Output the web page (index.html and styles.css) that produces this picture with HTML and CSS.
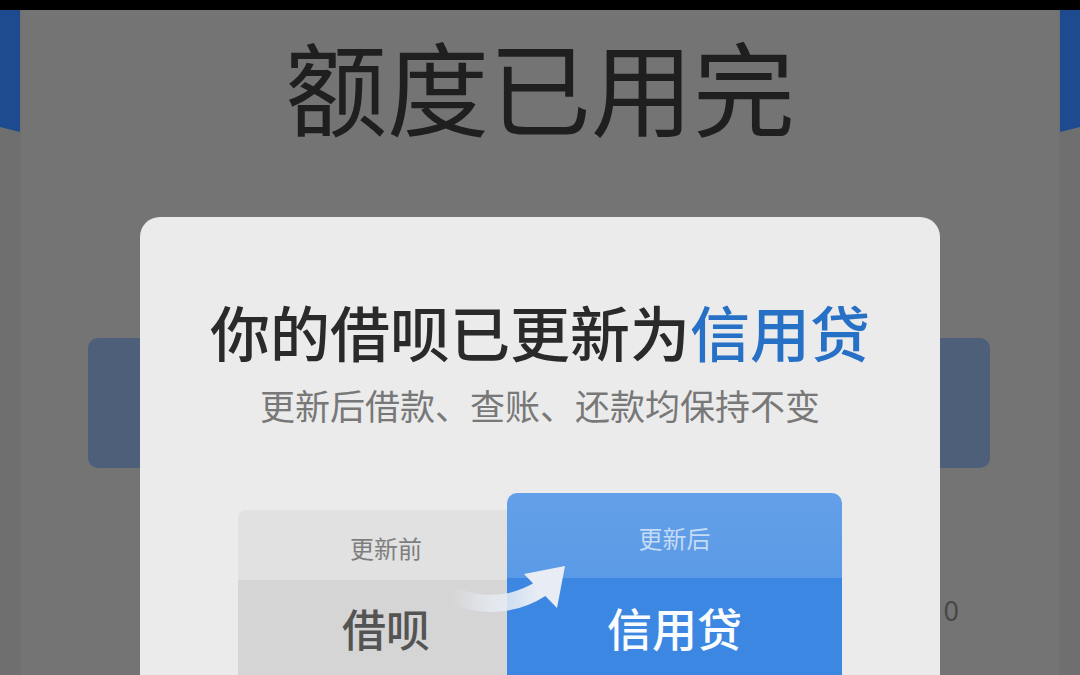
FILE: index.html
```html
<!DOCTYPE html>
<html lang="zh-CN">
<head>
<meta charset="utf-8">
<title>额度已用完</title>
<link rel="stylesheet" href="styles.css">
</head>
<body>
<div class="page">
  <div class="topbar"></div>
  <div class="screen">
    <div class="side"><div class="side-tab left-tab"></div></div>
    <div class="main">
      <h1 class="heading">额度已用完</h1>
      <div class="banner"></div>
      <div class="amount-row"><span class="amount">0</span></div>
    </div>
    <div class="side"><div class="side-tab right-tab"></div></div>
  </div>

  <div class="dialog">
    <h2 class="dialog-title">你的借呗已更新为<span class="accent">信用贷</span></h2>
    <p class="dialog-sub">更新后借款、查账、还款均保持不变</p>
    <div class="compare">
      <div class="card before">
        <div class="card-head">更新前</div>
        <div class="card-body">借呗</div>
      </div>
      <div class="card after">
        <div class="card-head">更新后</div>
        <div class="card-body">信用贷</div>
      </div>
      <svg class="arrow" width="140" height="80" viewBox="0 0 140 80" aria-hidden="true">
        <defs>
          <linearGradient id="fade" gradientUnits="userSpaceOnUse" x1="10" y1="0" x2="100" y2="0">
            <stop offset="0" stop-color="#e6ebf3" stop-opacity="0"/>
            <stop offset="0.45" stop-color="#e6ebf3" stop-opacity="0.8"/>
            <stop offset="1" stop-color="#e8edf5" stop-opacity="1"/>
          </linearGradient>
        </defs>
        <path d="M12 46 Q62 64 102 38" fill="none" stroke="url(#fade)" stroke-width="17"/>
        <polygon points="84,24 125,16 117,58" fill="#e8edf5"/>
      </svg>
    </div>
  </div>
</div>
</body>
</html>
```

FILE: styles.css
```css
* { box-sizing: border-box; }

html, body {
  margin: 0;
  padding: 0;
  background: #000;
}

body {
  font-family: "Noto Sans CJK SC", "Noto Sans", sans-serif;
}

.page {
  position: relative;
  width: 1080px;
  height: 675px;
  overflow: hidden;
  display: flex;
  flex-direction: column;
  background: #737373;
}

.topbar {
  height: 10px;
  background: #000;
  flex: 0 0 auto;
}

.screen {
  flex: 1;
  display: flex;
}

.side {
  width: 21px;
  background: #6f6f6f;
  flex: 0 0 auto;
}

.side-tab {
  height: 122px;
  background: #1e4a90;
}

.left-tab {
  width: 20px;
  clip-path: polygon(0 0, 100% 0, 100% 100%, 0 96%);
}

.right-tab {
  width: 20px;
  margin-left: 1px;
  clip-path: polygon(0 0, 100% 0, 100% 96%, 0 100%);
}

.main {
  flex: 1;
  display: flex;
  flex-direction: column;
  background: #747474;
}

.heading {
  margin: 15px 0 0;
  text-align: center;
  font-size: 102px;
  font-weight: 400;
  line-height: 120px;
  color: #1f1f1f;
  letter-spacing: 0;
}

.banner {
  margin: 193px 69px 0 67px;
  height: 130px;
  border-radius: 10px;
  background: #4e5f79;
}

.amount-row {
  display: flex;
  justify-content: flex-end;
  padding-right: 100px;
  margin-top: 128px;
}

.amount {
  font-family: "Noto Sans", sans-serif;
  font-size: 27px;
  line-height: 30px;
  color: #474747;
}

.dialog {
  position: absolute;
  left: 140px;
  top: 217px;
  width: 800px;
  height: 520px;
  border-radius: 20px;
  background: #ebebeb;
  display: flex;
  flex-direction: column;
  align-items: center;
}

.dialog-title {
  margin: 76px 0 0;
  font-size: 60px;
  line-height: 76px;
  font-weight: 500;
  color: #2a2a2a;
  white-space: nowrap;
}

.accent {
  color: #2670c6;
}

.dialog-sub {
  margin: 14px 0 0;
  font-size: 35px;
  line-height: 44px;
  color: #787878;
  white-space: nowrap;
}

.compare {
  position: relative;
  margin-top: 66px;
  width: 604px;
  flex: 1;
  display: flex;
}

.card {
  display: flex;
  flex-direction: column;
  text-align: center;
}

.before {
  width: 296px;
  margin-right: -27px;
  margin-top: 17px;
  border-radius: 8px 0 0 0;
  overflow: hidden;
}

.before .card-head {
  height: 70px;
  line-height: 76px;
  background: #e1e1e1;
  color: #7e7e7e;
  font-size: 24px;
}

.before .card-body {
  flex: 1;
  background: #d5d5d5;
  color: #545454;
  font-size: 44px;
  font-weight: 500;
  line-height: 96px;
}

.after {
  position: relative;
  z-index: 1;
  width: 335px;
  border-radius: 10px 10px 0 0;
  overflow: hidden;
}

.after .card-head {
  height: 85px;
  line-height: 90px;
  background: linear-gradient(180deg, #64a0e9 0%, #5b9ae6 100%);
  color: #c4dbf6;
  font-size: 24px;
}

.after .card-body {
  flex: 1;
  background: #3c87e1;
  color: #fafcff;
  font-size: 45px;
  font-weight: 500;
  line-height: 100px;
}

.arrow {
  position: absolute;
  z-index: 2;
  left: 202px;
  top: 57px;
}
```
